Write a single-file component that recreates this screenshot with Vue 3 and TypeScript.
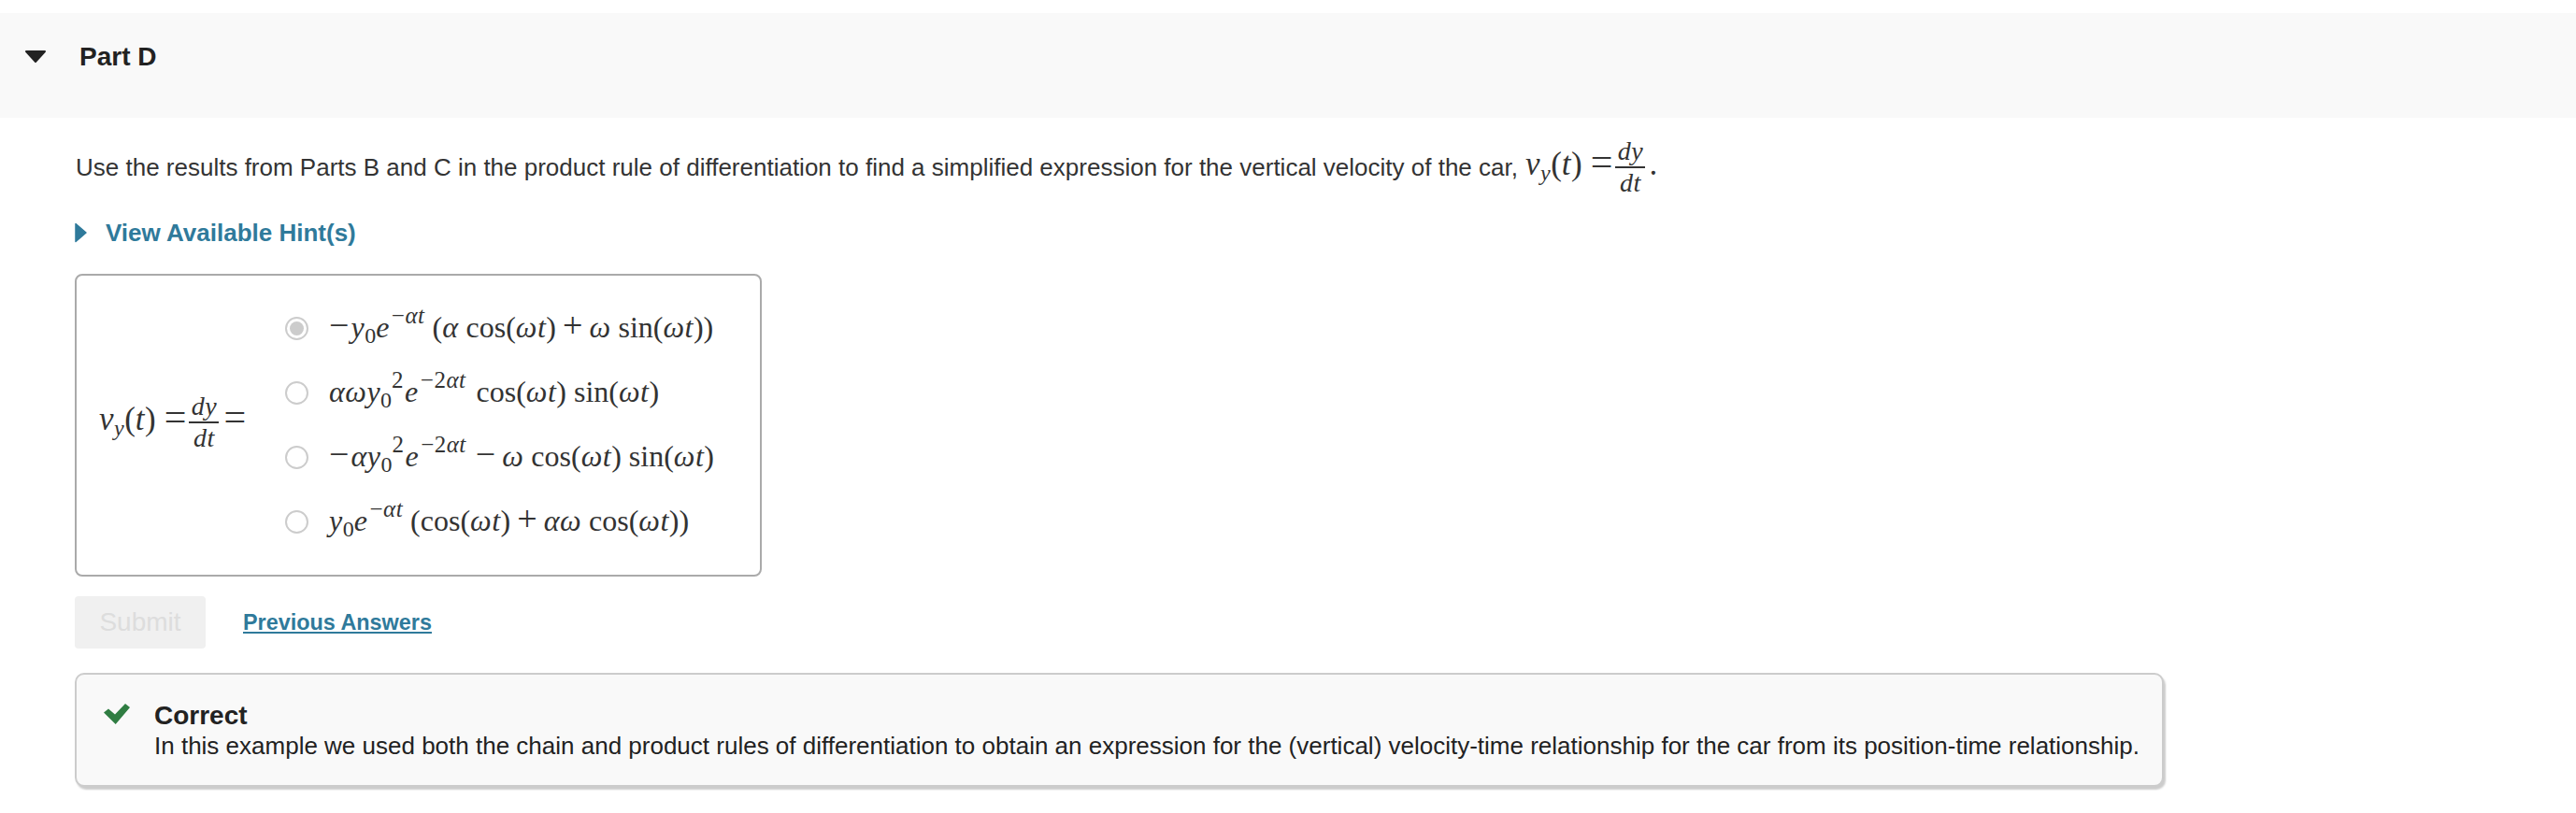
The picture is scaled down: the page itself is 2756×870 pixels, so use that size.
<script setup lang="ts">
const feedback =
  'In this example we used both the chain and product rules of differentiation to obtain an expression for the (vertical) velocity-time relationship for the car from its position-time relationship.'
</script>

<template>
  <div class="page">
    <header class="part-head">
      <svg class="caret-down" width="22" height="13" viewBox="0 0 22 13"><path d="M1 1H21L11 12Z" fill="#222" stroke="#222" stroke-width="2" stroke-linejoin="round" /></svg>
      <h2 class="part-title">Part D</h2>
    </header>

    <section class="content">
      <p class="prompt">
        <span>Use the results from Parts B and C in the product rule of differentiation to find a simplified expression for the vertical velocity of the car,</span>
        <span class="math prompt-math">
          <i>v</i><sub><i>y</i></sub>(<i>t</i>)<span class="eq">=</span><span class="frac"><span class="num"><i>dy</i></span><span class="den"><i>dt</i></span></span><span class="dot">.</span>
        </span>
      </p>

      <div class="hint">
        <svg class="caret-right" width="13" height="22" viewBox="0 0 13 22"><path d="M1 1.5L12 11L1 20.5Z" fill="#2f7a9b" stroke="#2f7a9b" stroke-width="1.5" stroke-linejoin="round" /></svg>
        <a class="hint-link">View Available Hint(s)</a>
      </div>

      <div class="answer-box">
        <div class="math lhs">
          <i>v</i><sub><i>y</i></sub>(<i>t</i>)<span class="eq">=</span><span class="frac"><span class="num"><i>dy</i></span><span class="den"><i>dt</i></span></span><span class="eq eq-after">=</span>
        </div>
        <div class="options">
          <label class="option">
            <span class="radio checked"></span>
            <span class="math"><span class="op">−</span><i>y</i><sub>0</sub><i>e</i><sup class="wide">−<i>αt</i></sup>(<i>α</i> cos(<i>ωt</i>)<span class="bin">+</span><i>ω</i> sin(<i>ωt</i>))</span>
          </label>
          <label class="option">
            <span class="radio"></span>
            <span class="math"><i>αωy</i><sub>0</sub><sup class="sq">2</sup><i>e</i><sup>−2<i>αt</i></sup> cos(<i>ωt</i>) sin(<i>ωt</i>)</span>
          </label>
          <label class="option">
            <span class="radio"></span>
            <span class="math"><span class="op">−</span><i>αy</i><sub>0</sub><sup class="sq">2</sup><i>e</i><sup>−2<i>αt</i></sup><span class="bin">−</span><i>ω</i> cos(<i>ωt</i>) sin(<i>ωt</i>)</span>
          </label>
          <label class="option">
            <span class="radio"></span>
            <span class="math"><i>y</i><sub>0</sub><i>e</i><sup class="wide">−<i>αt</i></sup>(cos(<i>ωt</i>)<span class="bin">+</span><i>αω</i> cos(<i>ωt</i>))</span>
          </label>
        </div>
      </div>

      <div class="actions">
        <button class="submit" disabled>Submit</button>
        <a class="prev-link">Previous Answers</a>
      </div>

      <div class="feedback">
        <svg class="check" width="28" height="22" viewBox="0 0 28 22"><path d="M0 9.5L5 5.5L12 11.5L23 0L28 4L12.7 22Z" fill="#2f7d42" /></svg>
        <div class="feedback-text">
          <div class="feedback-title">Correct</div>
          <div class="feedback-body">{{ feedback }}</div>
        </div>
      </div>
    </section>
  </div>
</template>

<style>
html, body { margin: 0; background: #fff; }
</style>

<style scoped>
.page {
  width: 2756px;
  height: 870px;
  padding-top: 14px;
  box-sizing: border-box;
  overflow: hidden;
  font-family: "Liberation Sans", Arial, sans-serif;
  color: #333;
}
.part-head {
  display: flex;
  align-items: flex-start;
  height: 112px;
  background: #f9f9f9;
  padding: 28px 0 0 27px;
  box-sizing: border-box;
}
.caret-down { margin-top: 12px; flex: none; }
.part-title {
  margin: 0 0 0 36px;
  font-size: 28px;
  line-height: 38px;
  font-weight: 700;
  color: #222;
}
.content { padding: 0 0 0 80px; }
.prompt {
  display: flex;
  align-items: center;
  margin: 0;
  height: 106px;
  font-size: 26px;
  color: #333;
  padding-left: 1px;
}
.math {
  font-family: "Liberation Serif", "Times New Roman", serif;
  font-size: 32px;
  color: #333;
  display: inline-block;
  white-space: pre;
}
.lhs, .prompt-math { font-size: 35px; }
.math i { font-style: italic; letter-spacing: 0.5px; }
.math sub { font-size: 24px; line-height: 0; position: relative; top: 6px; vertical-align: baseline; }
.math sup { font-size: 25px; line-height: 0; position: relative; top: -15px; vertical-align: baseline; letter-spacing: 0.5px; margin-left: 2px; margin-right: 3px; }
.math sup.sq { margin-left: 0; margin-right: 1px; top: -15px; }
.math sup.wide { margin-right: 8px; }
.op { font-size: 38px; line-height: 0; margin-right: 2px; }
.bin { font-size: 38px; line-height: 0; margin: 0 7px; }
.eq { font-size: 42px; line-height: 0; margin: 0 3px 0 9px; }
.eq.eq-after { margin: 0 0 0 5px; }
.prompt-math { margin-left: 8px; }
.frac {
  display: inline-flex;
  flex-direction: column;
  align-items: center;
  vertical-align: middle;
  min-width: 32px;
  font-size: 28px;
  line-height: 28px;
}
.num { align-self: stretch; text-align: center; padding: 0 0 2px; border-bottom: 2px solid #333; }
.den { padding: 2px 0 0; }
.dot { margin-left: 4px; }
.hint {
  display: flex;
  align-items: center;
  height: 32px;
  margin-top: 1px;
}
.hint-link {
  margin-left: 20px;
  font-size: 26px;
  font-weight: 700;
  color: #2f7a9b;
}
.answer-box {
  display: flex;
  align-items: center;
  box-sizing: border-box;
  width: 735px;
  height: 324px;
  margin-top: 28px;
  border: 2px solid #aaa;
  border-radius: 8px;
  padding: 0 0 0 24px;
}
.lhs { width: 175px; flex: none; margin-bottom: 6px; }
.options {
  display: flex;
  flex-direction: column;
  margin-left: 24px;
}
.option { display: flex; align-items: center; height: 69px; }
.option .math { margin-bottom: 2px; }
.radio {
  width: 25px;
  height: 25px;
  box-sizing: border-box;
  border: 2px solid #ccc;
  border-radius: 50%;
  margin-right: 22px;
  flex: none;
  background: #fff;
  position: relative;
}
.radio.checked::after {
  content: "";
  position: absolute;
  inset: 3px;
  border-radius: 50%;
  background: #ccc;
}
.actions { display: flex; align-items: center; margin-top: 21px; }
.submit {
  width: 140px;
  height: 56px;
  border: 0;
  border-radius: 4px;
  background: #f0f0f0;
  color: #ddd;
  font: 28px "Liberation Sans", Arial, sans-serif;
  padding: 0;
}
.prev-link {
  margin-left: 40px;
  font-size: 23.4px;
  font-weight: 700;
  color: #2f7a9b;
  text-decoration: underline;
}
.feedback {
  display: flex;
  box-sizing: border-box;
  width: 2235px;
  height: 122px;
  margin-top: 26px;
  background: #f9f9f9;
  border: 2px solid #ccc;
  border-radius: 10px;
  box-shadow: 2px 3px 2px #ccc;
  padding: 31px 0 0 29px;
}
.check { flex: none; margin-right: 26px; }
.feedback-text { margin-top: -4px; }
.feedback-title { font-size: 28px; line-height: 33px; font-weight: 700; color: #222; }
.feedback-body { font-size: 26px; line-height: 33px; color: #222; white-space: nowrap; }
</style>
